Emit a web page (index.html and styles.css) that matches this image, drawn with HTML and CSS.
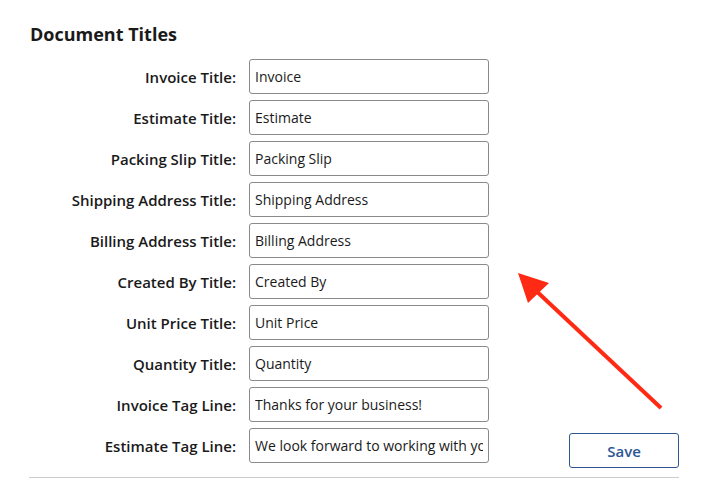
FILE: index.html
```html
<!DOCTYPE html>
<html lang="en">
<head>
    <meta charset="UTF-8">
    <meta name="viewport" content="width=device-width, initial-scale=1.0">
    <title>Document Titles</title>
    <link rel="stylesheet" href="styles.css">
</head>
<body>

    <div id="settings">
        <h2>Document Titles</h2>

        <div class="panel">
            <form class="fields">
                <label for="invoice-title">Invoice Title:</label>
                <input id="invoice-title" type="text" value="Invoice">

                <label for="estimate-title">Estimate Title:</label>
                <input id="estimate-title" type="text" value="Estimate">

                <label for="packing-title">Packing Slip Title:</label>
                <input id="packing-title" type="text" value="Packing Slip">

                <label for="shipping-title">Shipping Address Title:</label>
                <input id="shipping-title" type="text" value="Shipping Address">

                <label for="billing-title">Billing Address Title:</label>
                <input id="billing-title" type="text" value="Billing Address">

                <label for="created-title">Created By Title:</label>
                <input id="created-title" type="text" value="Created By">

                <label for="price-title">Unit Price Title:</label>
                <input id="price-title" type="text" value="Unit Price">

                <label for="quantity-title">Quantity Title:</label>
                <input id="quantity-title" type="text" value="Quantity">

                <label for="invoice-tag">Invoice Tag Line:</label>
                <input id="invoice-tag" type="text" value="Thanks for your business!">

                <label for="estimate-tag">Estimate Tag Line:</label>
                <input id="estimate-tag" type="text" value="We look forward to working with you!">
            </form>

            <button class="save">Save</button>
        </div>

        <!-- annotation arrow -->
        <svg class="arrow" width="160" height="150" viewBox="0 0 160 150">
            <line x1="147" y1="138" x2="18" y2="17" stroke="#ff2a14" stroke-width="4" stroke-linecap="butt"/>
            <polygon points="4,3 35,13 14,33" fill="#ff2a14"/>
        </svg>
    </div>

</body>
</html>
```

FILE: styles.css
```css
body {
    font-family: 'Open Sans', 'Liberation Sans', sans-serif;
    background-color: #ffffff;
    color: #1a1a1a;
    margin: 0;
}

#settings {
    position: relative;
    width: 650px;
    margin-left: 29px;
    padding-top: 22px;
}

h2 {
    font-size: 18px;
    font-weight: 700;
    margin: 0 0 12px 1px;
    line-height: 25px;
}

.panel {
    display: flex;
    justify-content: space-between;
    align-items: flex-end;
    border-bottom: 1px solid #cccccc;
}

.fields {
    display: grid;
    grid-template-columns: 207px 240px;
    column-gap: 13px;
    row-gap: 6px;
    align-items: center;
    padding-bottom: 14px;
}

label {
    text-align: right;
    font-size: 15px;
    font-weight: 600;
    white-space: nowrap;
}

input {
    box-sizing: border-box;
    width: 240px;
    height: 35px;
    border: 1px solid #8a8a8a;
    border-radius: 3px;
    padding: 0 5px;
    font-family: 'Open Sans', 'Liberation Sans', sans-serif;
    font-size: 14px;
    color: #1a1a1a;
    outline: none;
}

button.save {
    width: 110px;
    height: 35px;
    margin-bottom: 9px;
    background-color: #ffffff;
    border: 1px solid #2c5592;
    border-radius: 3px;
    color: #2c5592;
    font-family: 'Open Sans', 'Liberation Sans', sans-serif;
    font-size: 15px;
    font-weight: 600;
    cursor: pointer;
}

.arrow {
    position: absolute;
    left: 485px;
    top: 270px;
}
```
